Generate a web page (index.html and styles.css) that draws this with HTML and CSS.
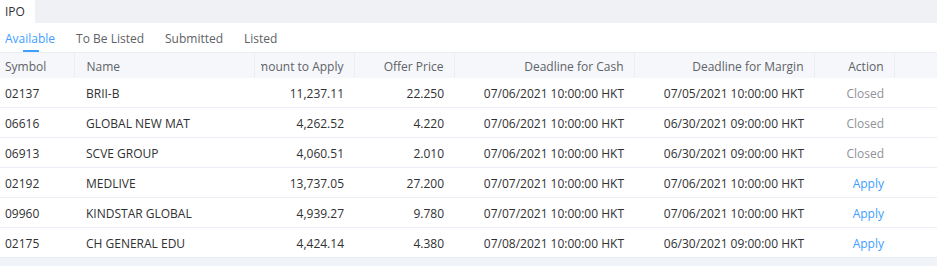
FILE: index.html
```html
<!DOCTYPE html>
<html lang="en">
<head>
    <meta charset="UTF-8">
    <title>IPO</title>
    <link rel="stylesheet" href="styles.css">
</head>
<body>
    <div class="top-bar">
        <div class="top-tab">IPO</div>
    </div>
    <div class="sub-tabs">
        <div class="sub-tab active">Available</div>
        <div class="sub-tab">To Be Listed</div>
        <div class="sub-tab">Submitted</div>
        <div class="sub-tab">Listed</div>
    </div>
    <table class="ipo-table">
        <colgroup>
            <col style="width:74px">
            <col style="width:180px">
            <col style="width:100px">
            <col style="width:100px">
            <col style="width:180px">
            <col style="width:180px">
            <col style="width:80px">
            <col>
        </colgroup>
        <thead>
            <tr>
                <th class="left first">Symbol</th>
                <th class="left name">Name</th>
                <th class="amount"><div class="clip">Amount to Apply</div></th>
                <th>Offer Price</th>
                <th>Deadline for Cash</th>
                <th>Deadline for Margin</th>
                <th>Action</th>
                <th class="filler"></th>
            </tr>
        </thead>
        <tbody>
            <tr>
                <td class="left first">02137</td>
                <td class="left name">BRII-B</td>
                <td>11,237.11</td>
                <td>22.250</td>
                <td>07/06/2021 10:00:00 HKT</td>
                <td>07/05/2021 10:00:00 HKT</td>
                <td class="closed">Closed</td>
                <td></td>
            </tr>
            <tr>
                <td class="left first">06616</td>
                <td class="left name">GLOBAL NEW MAT</td>
                <td>4,262.52</td>
                <td>4.220</td>
                <td>07/06/2021 10:00:00 HKT</td>
                <td>06/30/2021 09:00:00 HKT</td>
                <td class="closed">Closed</td>
                <td></td>
            </tr>
            <tr>
                <td class="left first">06913</td>
                <td class="left name">SCVE GROUP</td>
                <td>4,060.51</td>
                <td>2.010</td>
                <td>07/06/2021 10:00:00 HKT</td>
                <td>06/30/2021 09:00:00 HKT</td>
                <td class="closed">Closed</td>
                <td></td>
            </tr>
            <tr>
                <td class="left first">02192</td>
                <td class="left name">MEDLIVE</td>
                <td>13,737.05</td>
                <td>27.200</td>
                <td>07/07/2021 10:00:00 HKT</td>
                <td>07/06/2021 10:00:00 HKT</td>
                <td class="apply">Apply</td>
                <td></td>
            </tr>
            <tr>
                <td class="left first">09960</td>
                <td class="left name">KINDSTAR GLOBAL</td>
                <td>4,939.27</td>
                <td>9.780</td>
                <td>07/07/2021 10:00:00 HKT</td>
                <td>07/06/2021 10:00:00 HKT</td>
                <td class="apply">Apply</td>
                <td></td>
            </tr>
            <tr>
                <td class="left first">02175</td>
                <td class="left name">CH GENERAL EDU</td>
                <td>4,424.14</td>
                <td>4.380</td>
                <td>07/08/2021 10:00:00 HKT</td>
                <td>06/30/2021 09:00:00 HKT</td>
                <td class="apply">Apply</td>
                <td></td>
            </tr>
        </tbody>
    </table>
    <div class="bottom-band"></div>
</body>
</html>
```

FILE: styles.css
```css
body {
    margin: 0;
    font-family: "Open Sans", "Noto Sans", sans-serif;
    font-size: 12px;
    color: #303133;
    background: #fff;
}

.top-bar {
    display: flex;
    height: 23px;
    background-color: #eff1f5;
}

.top-tab {
    width: 35px;
    padding-left: 5px;
    box-sizing: border-box;
    line-height: 23px;
    background-color: #fff;
    color: #303133;
}

.sub-tabs {
    display: flex;
    height: 29px;
    border-bottom: 1px solid #ebeef5;
    padding-left: 5px;
}

.sub-tab {
    position: relative;
    line-height: 32px;
    margin-right: 21px;
    color: #606266;
}

.sub-tab.active {
    color: #409eff;
}

.sub-tab.active::after {
    content: "";
    position: absolute;
    left: 18px;
    bottom: 0;
    width: 16px;
    height: 2px;
    background-color: #409eff;
}

.ipo-table {
    width: 100%;
    border-collapse: collapse;
    table-layout: fixed;
}

.ipo-table th {
    height: 24px;
    padding: 1px 10px 0;
    background-color: #f5f7fa;
    color: #606266;
    font-weight: normal;
    text-align: right;
    border-right: 1px solid #ebeef5;
    white-space: nowrap;
}

.ipo-table th.filler {
    border-right: none;
}

.ipo-table th.amount {
    padding-left: 6px;
}

.ipo-table td {
    height: 28px;
    padding: 1px 10px 0;
    text-align: right;
    border-bottom: 1px solid #ebeef5;
    white-space: nowrap;
}

.ipo-table .left {
    text-align: left;
}

.ipo-table .first {
    padding-left: 5px;
}

.ipo-table .name {
    padding-left: 12px;
}

.clip {
    display: flex;
    justify-content: flex-end;
    overflow: hidden;
}

.closed {
    color: #909399;
}

.apply {
    color: #409eff;
}

.bottom-band {
    height: 8px;
    background-color: #f0f3f8;
}
```
